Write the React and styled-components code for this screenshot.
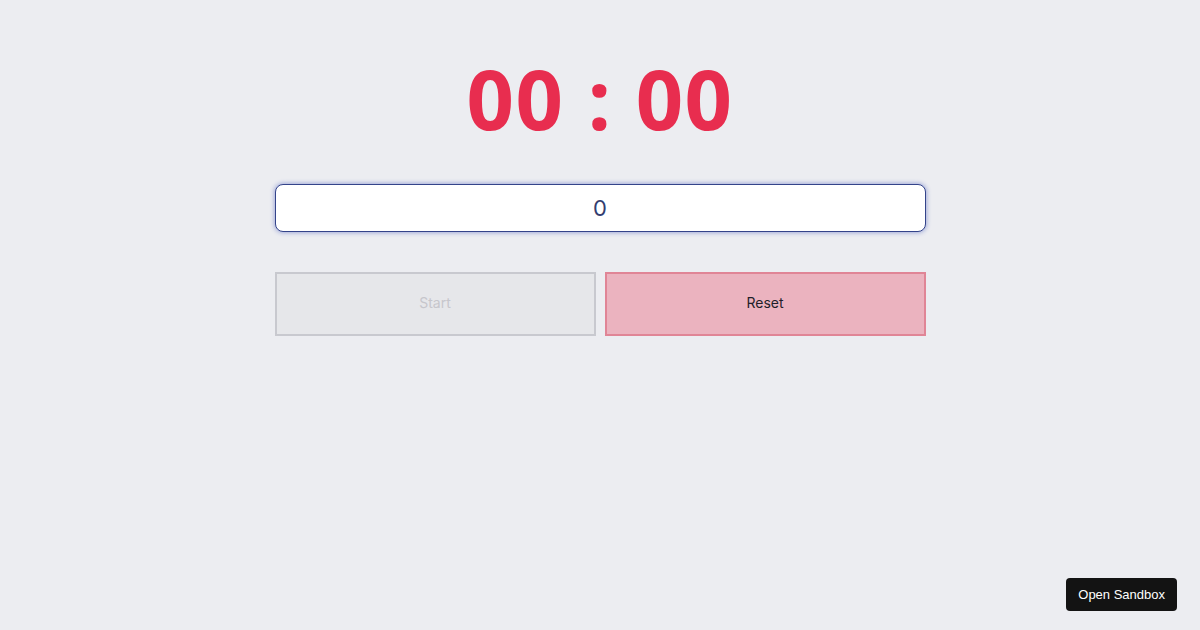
import React from "react";
import styled, { createGlobalStyle } from "styled-components";

const Global = createGlobalStyle`
  html, body { margin: 0; padding: 0; }
  body {
    background: #ecedf1;
    font-family: "Open Sans", "Noto Sans", sans-serif;
    min-height: 630px;
  }
`;

const Page = styled.div`
  width: 1200px;
  height: 630px;
  display: flex;
  flex-direction: column;
  align-items: center;
  box-sizing: border-box;
  padding-top: 45px;
  position: relative;
`;

const Timer = styled.h1`
  margin: 0;
  font-family: "Open Sans", "Noto Sans", sans-serif;
  font-weight: 700;
  font-size: 83px;
  line-height: 106px;
  color: #e82d4f;
  letter-spacing: 1.5px;
`;

const Panel = styled.div`
  width: 651px;
  display: flex;
  flex-direction: column;
  gap: 40px;
  margin-top: 33px;
`;

const Input = styled.input`
  box-sizing: border-box;
  width: 100%;
  height: 48px;
  border: 1.5px solid #34448a;
  border-radius: 8px;
  background: #fff;
  box-shadow: 0 0 4px 1px rgba(70, 90, 190, 0.45);
  text-align: center;
  font-family: "Inter", "Open Sans", sans-serif;
  font-size: 22px;
  color: #333d70;
  outline: none;
`;

const Row = styled.div`
  display: grid;
  grid-template-columns: 1fr 1fr;
  gap: 9px;
`;

const Button = styled.button`
  box-sizing: border-box;
  height: 64px;
  border: 2px solid ${(p) => (p.$variant === "reset" ? "#e08596" : "#c8c9cf")};
  background: ${(p) => (p.$variant === "reset" ? "#ebb3bf" : "#e6e7ea")};
  color: ${(p) => (p.$variant === "reset" ? "#1f1f2a" : "#c6c6cc")};
  font-family: "Inter", "Open Sans", sans-serif;
  font-size: 14px;
  cursor: pointer;
  padding: 0 0 3px;
`;

const Sandbox = styled.a`
  position: absolute;
  right: 23px;
  bottom: 19px;
  height: 33px;
  padding: 0 12px;
  display: flex;
  align-items: center;
  background: #131313;
  color: #fff;
  border-radius: 4px;
  font-family: "Liberation Sans", Arial, sans-serif;
  font-size: 13px;
  text-decoration: none;
`;

export default function App() {
  return (
    <>
      <Global />
      <Page>
        <Timer>00 : 00</Timer>
        <Panel>
          <Input type="text" inputMode="numeric" defaultValue="0" />
          <Row>
            <Button disabled>Start</Button>
            <Button $variant="reset">Reset</Button>
          </Row>
        </Panel>
        <Sandbox href="#">Open Sandbox</Sandbox>
      </Page>
    </>
  );
}
